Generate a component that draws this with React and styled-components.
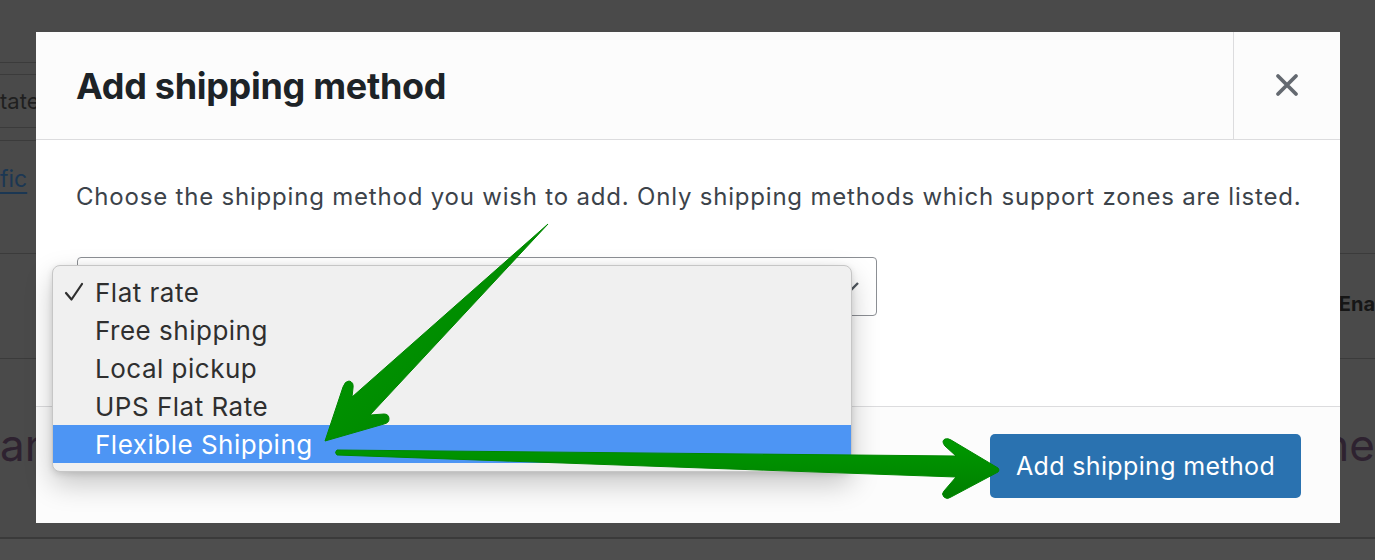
import React from "react";
import styled, { createGlobalStyle } from "styled-components";

const Global = createGlobalStyle`
  html, body { margin: 0; padding: 0; }
  body {
    width: 1375px;
    height: 560px;
    overflow: hidden;
    font-family: Inter, "Noto Sans", "Liberation Sans", sans-serif;
    background: #4a4a4a;
  }
  * { box-sizing: border-box; }
`;

/* ---------- darkened admin page behind the modal ---------- */
const Page = styled.div`
  position: relative;
  width: 1375px;
  height: 560px;
  overflow: hidden;
  background: #4a4a4a;
  display: flex;
  flex-direction: column;
`;

const FieldBand = styled.div`
  width: 700px;
  margin-top: 62px;
  height: 79px;
  border-top: 1px solid #3b3b3b;
  border-bottom: 1px solid #3b3b3b;
  padding-top: 11px;
`;

const FieldInner = styled.div`
  height: 54px;
  border-top: 1px solid #3b3b3b;
  border-bottom: 1px solid #3b3b3b;
  display: flex;
  align-items: center;
  font-size: 22px;
  color: #1f1f1f;
`;

const LinkLine = styled.div`
  height: 112px;
  display: flex;
  align-items: flex-start;
  padding-top: 24px;
`;

const DimLink = styled.span`
  font-size: 23px;
  color: #1b3753;
  text-decoration: underline;
  text-underline-offset: 5px;
  padding-right: 30px;
`;

const HeadRow = styled.div`
  height: 106px;
  border-top: 1px solid #3b3b3b;
  border-bottom: 1px solid #3b3b3b;
  display: flex;
  align-items: center;
  justify-content: flex-end;
  padding-bottom: 4px;
`;

const HeadCell = styled.span`
  font-size: 20px;
  font-weight: 700;
  color: #161616;
`;

const BodyRow = styled.div`
  height: 180px;
  border-bottom: 2px solid #3a3a3a;
  display: flex;
  align-items: flex-start;
  justify-content: space-between;
  padding-top: 64px;
`;

const BigText = styled.span`
  font-size: 44px;
  line-height: 1;
  color: #2e2230;
`;

const PageFoot = styled.div`
  flex: 1;
  background: #4e4e4e;
`;

/* ---------- modal ---------- */
const Modal = styled.div`
  position: absolute;
  left: 36px;
  top: 32px;
  width: 1304px;
  height: 491px;
  background: #fff;
  display: flex;
  flex-direction: column;
`;

const Header = styled.div`
  height: 108px;
  background: #fcfcfc;
  border-bottom: 1px solid #dcdcde;
  display: flex;
  align-items: stretch;
`;

const Title = styled.h1`
  flex: 1;
  margin: 0;
  padding-left: 40px;
  display: flex;
  align-items: center;
  font-size: 36px;
  font-weight: 700;
  letter-spacing: -0.3px;
  color: #1d2327;
`;

const CloseButton = styled.button`
  width: 107px;
  border: 0;
  border-left: 1px solid #dcdcde;
  background: transparent;
  display: flex;
  align-items: center;
  justify-content: center;
  padding: 0 0 2px 0;
`;

const Body = styled.div`
  flex: 1;
  padding: 40px 40px 0 40px;
  display: flex;
  flex-direction: column;
  align-items: flex-start;
`;

const Intro = styled.p`
  margin: 0;
  font-size: 24px;
  line-height: 34px;
  color: #3c434a;
  letter-spacing: 0.8px;
  white-space: nowrap;
`;

const SelectWrap = styled.div`
  position: relative;
  margin-top: 43px;
  margin-left: 1px;
`;

const SelectBox = styled.div`
  width: 800px;
  height: 59px;
  border: 1px solid #8c8f94;
  border-radius: 4px;
  background: #fff;
  display: flex;
  align-items: center;
  justify-content: flex-end;
  padding-right: 16px;
`;

const Menu = styled.ul`
  position: absolute;
  left: -25px;
  top: 8px;
  width: 800px;
  margin: 0;
  padding: 7px 0 8px;
  list-style: none;
  background: #f0f0f0;
  border: 1px solid #c6c6c6;
  border-radius: 8px;
  box-shadow: 0 12px 28px rgba(0, 0, 0, 0.22), 0 2px 6px rgba(0, 0, 0, 0.12);
`;

const Item = styled.li`
  position: relative;
  height: 38px;
  display: flex;
  align-items: center;
  padding-left: 42px;
  font-size: 26px;
  letter-spacing: 0.5px;
  color: ${(p) => (p.$active ? "#ffffff" : "#2f2f2f")};
  background: ${(p) => (p.$active ? "#4d95f4" : "transparent")};
`;

const Check = styled.span`
  position: absolute;
  left: 11px;
  top: 0;
  height: 38px;
  display: flex;
  align-items: center;
`;

const Footer = styled.div`
  height: 117px;
  background: #fcfcfc;
  border-top: 1px solid #dcdcde;
  display: flex;
  align-items: center;
  justify-content: flex-end;
  padding: 0 39px 0 0;
`;

const PrimaryButton = styled.button`
  width: 311px;
  height: 64px;
  border: 0;
  border-radius: 5px;
  background: #2a72b0;
  color: #fff;
  font-family: inherit;
  font-size: 25px;
  letter-spacing: 0.35px;
  display: flex;
  align-items: center;
  justify-content: center;
  margin-top: 1px;
`;

const Annotations = styled.svg`
  position: absolute;
  left: 0;
  top: 0;
  pointer-events: none;
`;

const options = [
  "Flat rate",
  "Free shipping",
  "Local pickup",
  "UPS Flat Rate",
  "Flexible Shipping",
];

export default function App() {
  return (
    <>
      <Global />
      <Page>
        <FieldBand>
          <FieldInner>tate</FieldInner>
        </FieldBand>
        <LinkLine>
          <DimLink>fic</DimLink>
        </LinkLine>
        <HeadRow>
          <HeadCell>Ena</HeadCell>
        </HeadRow>
        <BodyRow>
          <BigText>an</BigText>
          <BigText>he</BigText>
        </BodyRow>
        <PageFoot />

        <Modal>
          <Header>
            <Title>Add shipping method</Title>
            <CloseButton aria-label="Close">
              <svg width="24" height="24" viewBox="0 0 24 24">
                <path
                  d="M3 3 L21 21 M21 3 L3 21"
                  stroke="#646970"
                  strokeWidth="3.8"
                  strokeLinecap="round"
                  fill="none"
                />
              </svg>
            </CloseButton>
          </Header>
          <Body>
            <Intro>
              Choose the shipping method you wish to add. Only shipping methods
              which support zones are listed.
            </Intro>
            <SelectWrap>
              <SelectBox>
                <svg width="20" height="12" viewBox="0 0 20 12">
                  <path
                    d="M2 2 L10 10 L18 2"
                    stroke="#50575e"
                    strokeWidth="2.4"
                    fill="none"
                  />
                </svg>
              </SelectBox>
              <Menu>
                {options.map((o, i) => (
                  <Item key={o} $active={i === options.length - 1}>
                    {i === 0 && (
                      <Check>
                        <svg width="20" height="20" viewBox="0 0 20 20">
                          <path
                            d="M2 11 L7.5 17.5 L18 2"
                            stroke="#2f2f2f"
                            strokeWidth="2.2"
                            fill="none"
                            strokeLinecap="round"
                            strokeLinejoin="round"
                          />
                        </svg>
                      </Check>
                    )}
                    {o}
                  </Item>
                ))}
              </Menu>
            </SelectWrap>
          </Body>
          <Footer>
            <PrimaryButton>Add shipping method</PrimaryButton>
          </Footer>
        </Modal>

        <Annotations width="1375" height="560" viewBox="0 0 1375 560">
          <defs>
            <linearGradient id="g1" x1="0" y1="0" x2="1" y2="1">
              <stop offset="0" stopColor="#00a000" />
              <stop offset="1" stopColor="#007c00" />
            </linearGradient>
            <linearGradient id="g2" x1="0" y1="0" x2="0" y2="1">
              <stop offset="0" stopColor="#009a00" />
              <stop offset="1" stopColor="#007e00" />
            </linearGradient>
          </defs>
          <path
            d="M548,224 L370,415 L384,414 Q389,414 389,419 Q389,423 384,424 L325,441 L343,387 Q345,381 349,381 Q354,382 353,388 L352,397 Z"
            fill="url(#g1)"
            stroke="#008600"
            strokeWidth="1"
            strokeLinejoin="round"
          />
          <path
            d="M337,450 L956,456 L945,446 Q941,441 945,439 Q948,438 951,440 L998,468 Q1000,470 998,472 L951,497 Q947,500 944,497 Q941,494 944,491 L956,477 L337,455 Q334,452.5 337,450 Z"
            fill="url(#g2)"
            stroke="#008600"
            strokeWidth="1"
            strokeLinejoin="round"
          />
        </Annotations>
      </Page>
    </>
  );
}
